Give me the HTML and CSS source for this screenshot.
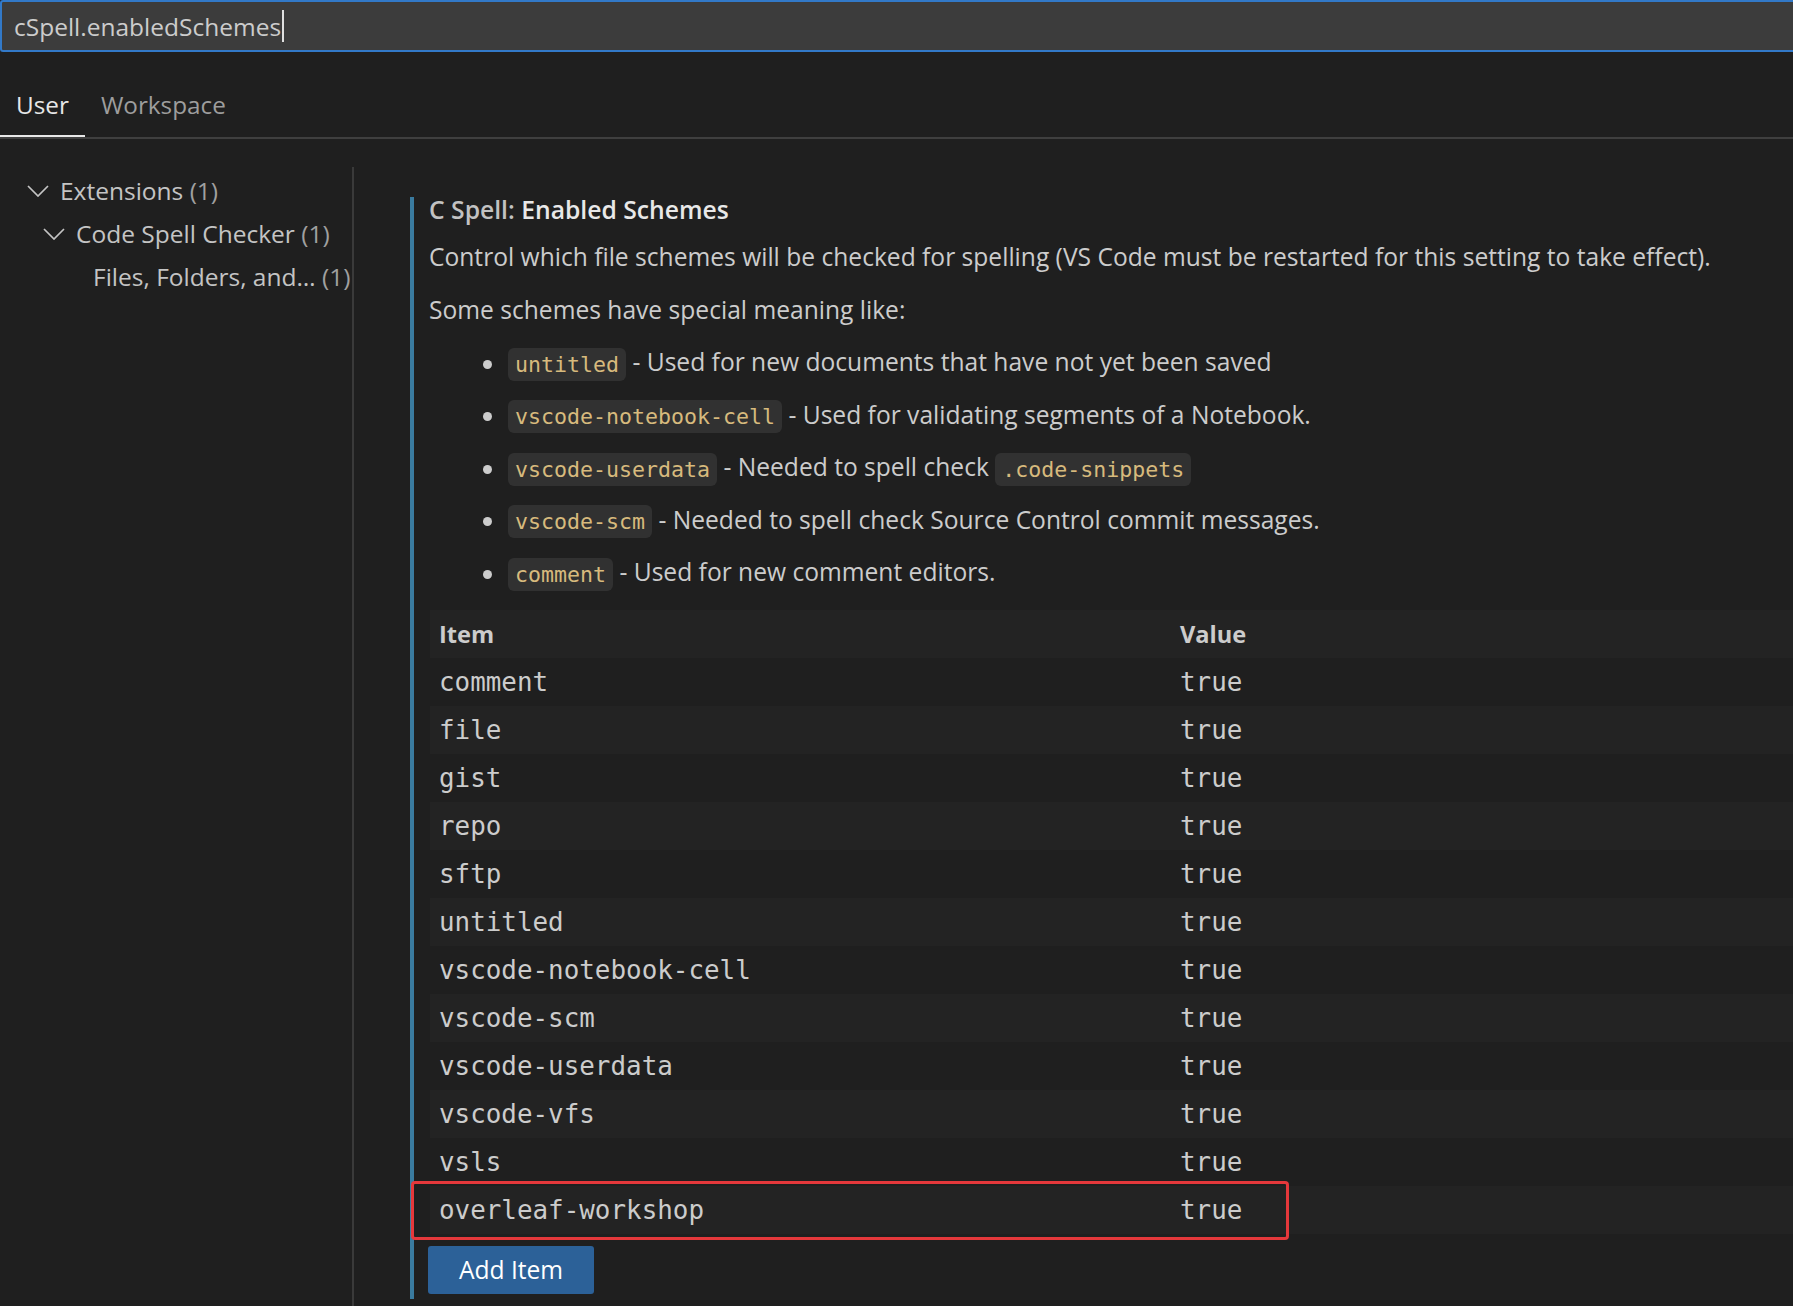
FILE: index.html
```html
<!DOCTYPE html>
<html lang="en">
<head>
  <meta charset="UTF-8" />
  <title>Settings</title>
  <link rel="stylesheet" href="styles.css">
</head>
<body>
  <div class="search">
    <span class="query">cSpell.enabledSchemes</span><span class="caret"></span>
  </div>

  <div class="tabs">
    <div class="tab active">User</div>
    <div class="tab">Workspace</div>
  </div>

  <div class="main">
    <div class="toc">
      <div class="node lvl0">
        <svg class="chev" width="22" height="12" viewBox="0 0 22 12"><polyline points="1,1 11,11 21,1" /></svg>
        <span>Extensions <span class="count">(1)</span></span>
      </div>
      <div class="node lvl1">
        <svg class="chev" width="22" height="12" viewBox="0 0 22 12"><polyline points="1,1 11,11 21,1" /></svg>
        <span>Code Spell Checker <span class="count">(1)</span></span>
      </div>
      <div class="node lvl2">
        <span>Files, Folders, and… <span class="count">(1)</span></span>
      </div>
    </div>

    <div class="content">
      <div class="setting">
        <div class="title"><span class="cat">C Spell: </span>Enabled Schemes</div>
        <p class="desc">Control which file schemes will be checked for spelling (VS Code must be restarted for this setting to take effect).</p>
        <p class="desc">Some schemes have special meaning like:</p>
        <ul class="schemes">
          <li><code>untitled</code> - Used for new documents that have not yet been saved</li>
          <li><code>vscode-notebook-cell</code> - Used for validating segments of a Notebook.</li>
          <li><code>vscode-userdata</code> - Needed to spell check <code>.code-snippets</code></li>
          <li><code>vscode-scm</code> - Needed to spell check Source Control commit messages.</li>
          <li><code>comment</code> - Used for new comment editors.</li>
        </ul>

        <table class="items">
          <thead>
            <tr><th>Item</th><th>Value</th></tr>
          </thead>
          <tbody>
            <tr><td>comment</td><td>true</td></tr>
            <tr><td>file</td><td>true</td></tr>
            <tr><td>gist</td><td>true</td></tr>
            <tr><td>repo</td><td>true</td></tr>
            <tr><td>sftp</td><td>true</td></tr>
            <tr><td>untitled</td><td>true</td></tr>
            <tr><td>vscode-notebook-cell</td><td>true</td></tr>
            <tr><td>vscode-scm</td><td>true</td></tr>
            <tr><td>vscode-userdata</td><td>true</td></tr>
            <tr><td>vscode-vfs</td><td>true</td></tr>
            <tr><td>vsls</td><td>true</td></tr>
            <tr class="marked"><td>overleaf-workshop<span class="highlight"></span></td><td>true</td></tr>
          </tbody>
        </table>

        <button class="add">Add Item</button>
      </div>
    </div>
  </div>
</body>
</html>
```

FILE: styles.css
```css
* { box-sizing: border-box; margin: 0; padding: 0; }
html, body { height: 100%; }
body { background: #1f1f1f; color: #cccccc; font-family: "Open Sans", "Noto Sans", sans-serif; font-size: 24.6px; overflow: hidden; }

.search { height: 52px; background: #3c3c3c; border: 2px solid #3279c8; border-right: none; border-radius: 3px 0 0 3px; display: flex; align-items: center; padding-left: 12px; font-size: 24.5px; color: #cccccc; }
.caret { width: 2px; height: 32px; background: #e0e0e0; margin-left: 1px; }

.tabs { display: flex; padding-top: 21px; border-bottom: 2px solid #3f3f3f; }
.tab { height: 64px; line-height: 64px; padding: 0 16px; font-size: 24.3px; color: #9d9d9d; }
.tab.active { color: #e7e7e7; box-shadow: inset 0 -2px #e7e7e7; }

.main { display: flex; margin-top: 28px; height: calc(100% - 167px); }

.toc { width: 354px; flex-shrink: 0; border-right: 2px solid #3a3a3a; padding-top: 2px; }
.node { height: 43px; display: flex; align-items: center; white-space: nowrap; color: #c4c4c4; font-size: 24.5px; }
.node .count { color: #a0a0a0; }
.chev { fill: none; stroke: #c4c4c4; stroke-width: 1.7; margin-right: 11px; flex-shrink: 0; }
.lvl0 { padding-left: 27px; }
.lvl1 { padding-left: 43px; }
.lvl2 { padding-left: 93px; }

.content { flex: 1; padding-top: 30px; min-width: 0; }
.setting { margin-left: 56px; border-left: 4px solid #3a7b9f; padding-left: 15px; padding-bottom: 5px; }

.title { font-weight: 600; color: #e8e8e8; line-height: 26px; font-size: 24.7px; }
.title .cat { color: #c2c2c2; }
.desc { line-height: 32px; white-space: nowrap; }
.title + .desc { margin-top: 18px; }
.desc + .desc { margin-top: 21px; }

.schemes { list-style: none; margin-top: 10px; padding-left: 54px; white-space: nowrap; }
.schemes li { height: 52.5px; line-height: 52.5px; }
.schemes li::before { content: ""; display: inline-block; width: 9px; height: 9px; border-radius: 50%; background: #cccccc; vertical-align: middle; margin-right: 16px; }
code { display: inline-block; vertical-align: middle; font-family: "DejaVu Sans Mono", "Liberation Mono", monospace; font-size: 21.6px; line-height: 33px; padding: 0 7px; border-radius: 6px; background: #313131; color: #d7ba7d; }

.items { border-collapse: collapse; margin-top: 11px; margin-left: 1px; width: calc(100% + 40px); }
.items th, .items td { height: 48px; padding: 0 0 0 9px; text-align: left; vertical-align: middle; }
.items th { font-weight: 700; font-size: 23.6px; color: #cccccc; }
.items th:first-child { width: 741px; }
.items td { font-family: "DejaVu Sans Mono", "Liberation Mono", monospace; font-size: 25.9px; color: #cccccc; }
.items thead tr, .items tbody tr:nth-child(even) { background: #232323; }

.marked td:first-child { position: relative; }
.highlight { position: absolute; left: -19px; top: -5px; width: 878px; height: 59px; border: 3px solid #e5383b; border-radius: 4px; }

.add { display: block; margin-top: 12px; margin-left: -1px; height: 48px; width: 166px; border: none; border-radius: 3px; background: #2c6198; color: #ffffff; font-family: "Open Sans", "Noto Sans", sans-serif; font-size: 24.6px; }
```
